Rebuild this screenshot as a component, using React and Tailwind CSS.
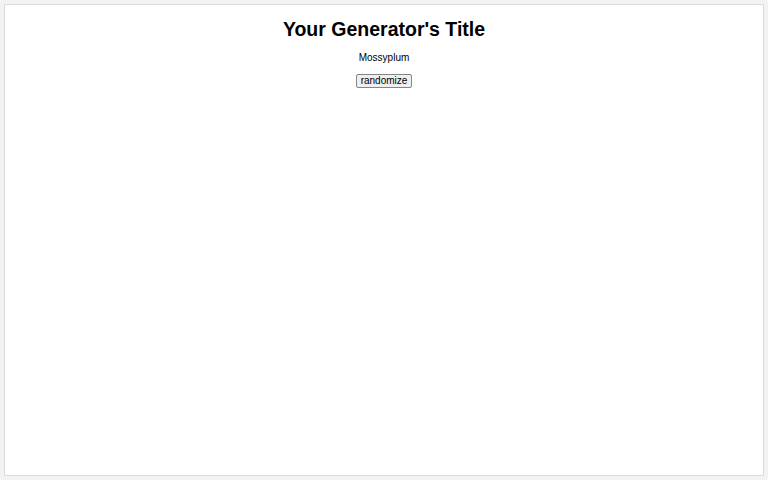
import { useState } from 'react';

const names = ['Mossyplum', 'Thornberry', 'Willowmint', 'Fernwhistle', 'Bramblecap', 'Duskpetal'];

export default function App() {
  const [name, setName] = useState(names[0]);

  const randomize = () => {
    setName(names[Math.floor(Math.random() * names.length)]);
  };

  return (
    <div className="h-[480px] w-full bg-[#f3f3f3] p-[4px]" style={{ fontFamily: '"Liberation Sans", Arial, sans-serif' }}>
      <div className="flex h-[472px] flex-col items-center border border-[#dcdcdc] bg-white">
        <h1 className="mt-[12px] text-[19.5px] font-bold leading-[24px] text-black">Your Generator's Title</h1>
        <p className="mt-[11px] text-[10px] leading-[12px] text-black">{name}</p>
        <button
          onClick={randomize}
          className="mt-[10px] rounded-[2px] border border-[#858585] bg-[#efefef] px-[4px] text-[10px] leading-[12px] text-black"
        >
          randomize
        </button>
      </div>
    </div>
  );
}
